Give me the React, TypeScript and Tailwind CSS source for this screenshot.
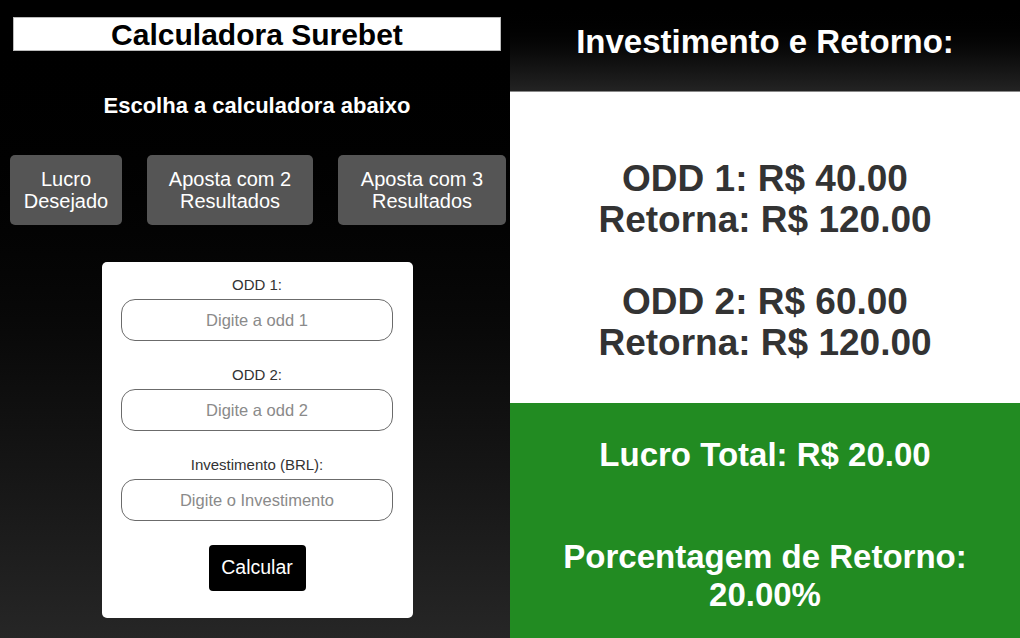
const ff = { fontFamily: '"Liberation Sans", Arial, sans-serif' }

function Field({ label, placeholder }: { label: string; placeholder: string }) {
  return (
    <div className="flex flex-col items-center">
      <label className="text-[15px] leading-[16px] text-[#333]">{label}</label>
      <input
        placeholder={placeholder}
        className="mt-[6px] h-[42px] w-[272px] rounded-[14px] border-[1.5px] border-[#6b6b6b] bg-white text-center text-[16.5px] text-[#333] placeholder:text-[#8a8a8a] outline-none"
      />
    </div>
  )
}

export default function App() {
  return (
    <div style={ff} className="flex h-[638px] w-[1020px] overflow-hidden">
      {/* left: calculator */}
      <div className="flex w-[510px] flex-col items-center bg-gradient-to-b from-[#000] to-[#262626] pl-[4px] pt-[17px]">
        <h1 className="flex h-[34px] w-[488px] items-center justify-center border border-[#bbb] bg-white text-[30px] font-bold text-black">
          Calculadora Surebet
        </h1>
        <p className="mt-[43px] text-[22px] font-bold leading-[24px] text-white">Escolha a calculadora abaixo</p>
        <div className="mt-[37px] ml-[6px] flex w-[496px] gap-[25px] self-start">
          <button className="h-[70px] w-[112px] rounded-[5px] bg-[#555] text-[20px] leading-[22px] text-white">
            Lucro
            <br />
            Desejado
          </button>
          <button className="h-[70px] w-[166px] rounded-[5px] bg-[#555] text-[20px] leading-[22px] text-white">
            Aposta com 2
            <br />
            Resultados
          </button>
          <button className="h-[70px] w-[168px] rounded-[5px] bg-[#555] text-[20px] leading-[22px] text-white">
            Aposta com 3
            <br />
            Resultados
          </button>
        </div>
        <div className="mt-[37px] flex h-[356px] w-[311px] flex-col items-center gap-[26px] rounded-[5px] bg-white pt-[15px]">
          <Field label="ODD 1:" placeholder="Digite a odd 1" />
          <Field label="ODD 2:" placeholder="Digite a odd 2" />
          <Field label="Investimento (BRL):" placeholder="Digite o Investimento" />
          <button className="-mt-[2px] h-[46px] w-[97px] rounded-[4px] bg-black text-[19.5px] text-white">Calcular</button>
        </div>
      </div>

      {/* right: results */}
      <div className="flex w-[510px] flex-col">
        <div className="flex h-[92px] items-center justify-center border-b border-[#888] bg-gradient-to-b from-[#000] to-[#232323]">
          <h2 className="-mt-[8px] text-[33px] font-bold text-white">Investimento e Retorno:</h2>
        </div>
        <div className="flex h-[311px] flex-col items-center justify-center gap-[41px] bg-white pt-[26px] text-[37px] font-bold leading-[41px] text-[#333]">
          <div className="text-center">
            ODD 1: R$ 40.00
            <br />
            Retorna: R$ 120.00
          </div>
          <div className="text-center">
            ODD 2: R$ 60.00
            <br />
            Retorna: R$ 120.00
          </div>
        </div>
        <div className="flex flex-1 flex-col items-center bg-[#228b22] pt-[33px] text-[33px] font-bold leading-[38px] text-white">
          <p>Lucro Total: R$ 20.00</p>
          <p className="mt-[64px] text-center">
            Porcentagem de Retorno:
            <br />
            20.00%
          </p>
        </div>
      </div>
    </div>
  )
}
